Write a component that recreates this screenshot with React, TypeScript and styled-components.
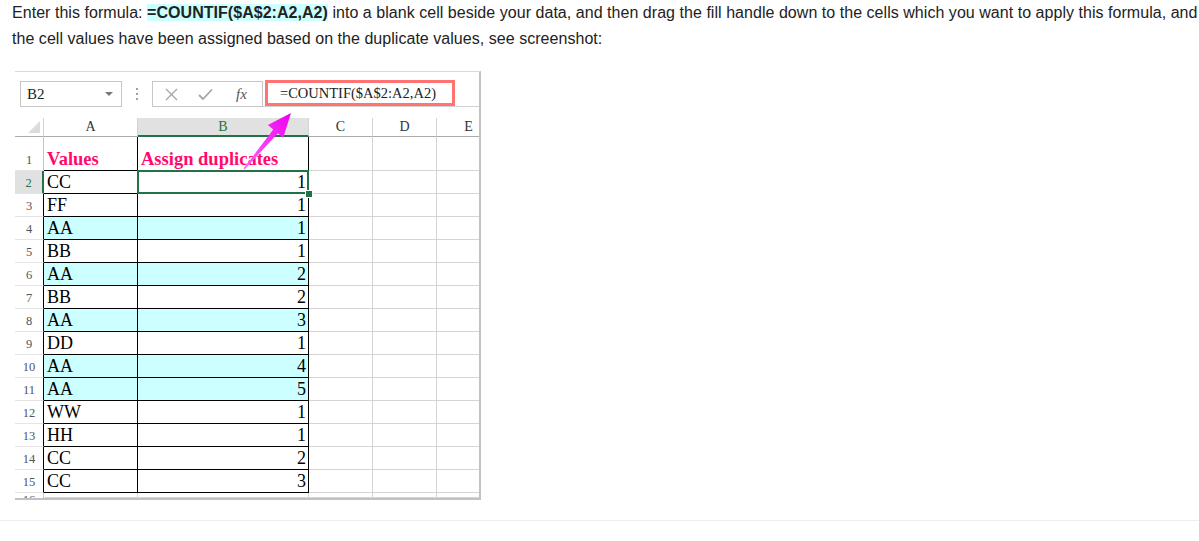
import React from "react";
import styled, { createGlobalStyle } from "styled-components";

const GlobalStyle = createGlobalStyle`
  html, body {
    margin: 0;
    padding: 0;
    background: #fff;
  }
  body {
    font-family: "Liberation Sans", Arial, sans-serif;
  }
`;

const GREEN = "#217346";
const SERIF = `"Liberation Serif", "Times New Roman", serif`;

const Article = styled.div`
  width: 1199px;
  height: 541px;
  overflow: hidden;
`;

const Intro = styled.p`
  margin: 0;
  padding: 0 0 0 12px;
  font-size: 16px;
  line-height: 26px;
  letter-spacing: 0.04px;
  color: #222;
`;

const Code = styled.b`
  background: #ccffff;
`;

const Shot = styled.div`
  position: relative;
  margin: 19px 0 0 15px;
  width: 464px;
  border-top: 1px solid #dadada;
  border-right: 2px solid #c2c2c2;
  border-bottom: 2px solid #c2c2c2;
  background: #fff;
`;

const FormulaBar = styled.div`
  display: flex;
  align-items: stretch;
  height: 26px;
  padding: 9px 0 0 5px;
  margin-bottom: 11px;
`;

const NameBox = styled.div`
  box-sizing: border-box;
  width: 102px;
  display: flex;
  align-items: center;
  justify-content: space-between;
  padding: 0 8px 0 6px;
  border: 1px solid #c6c6c6;
  font-family: ${SERIF};
  font-size: 15px;
  color: #222;
`;

const Caret = styled.span`
  width: 0;
  height: 0;
  border-left: 4px solid transparent;
  border-right: 4px solid transparent;
  border-top: 4px solid #777;
`;

const Kebab = styled.div`
  width: 30px;
  display: flex;
  flex-direction: column;
  align-items: center;
  justify-content: center;
  gap: 3px;

  & > i {
    width: 2px;
    height: 2px;
    background: #a0a0a0;
  }
`;

const FxButtons = styled.div`
  box-sizing: border-box;
  width: 111px;
  display: flex;
  align-items: center;
  padding-left: 12px;
  gap: 20px;
  border: 1px solid #c6c6c6;
`;

const Fx = styled.span`
  font-family: ${SERIF};
  font-style: italic;
  font-size: 15px;
  color: #555;
  margin-left: 3px;
`;

const FormulaInput = styled.div`
  flex: 1;
  display: flex;
  padding-left: 2px;
  border-bottom: 1px solid #d0d0d0;
`;

const Callout = styled.div`
  box-sizing: border-box;
  width: 190px;
  height: 26px;
  margin-top: -1px;
  padding-left: 12px;
  display: flex;
  align-items: center;
  border: 3px solid #ff7373;
  font-family: ${SERIF};
  font-size: 14.5px;
  color: #222;
`;

const Sheet = styled.div`
  display: grid;
  grid-template-columns: 29px 94px 171px 64px 64px 64px;
  grid-template-rows: 19px 34px repeat(14, 23px) 5px;
  overflow: hidden;
  font-family: ${SERIF};
`;

const Corner = styled.div`
  display: flex;
  align-items: flex-end;
  justify-content: flex-end;
  padding: 0 3px 3px 0;
  border-right: 1px solid #d4d4d4;
  border-bottom: 1px solid #ababab;

  & > i {
    width: 0;
    height: 0;
    border-left: 12px solid transparent;
    border-bottom: 12px solid #dcdcdc;
  }
`;

const ColHead = styled.div<{ $active?: boolean }>`
  display: flex;
  align-items: center;
  justify-content: center;
  font-size: 14px;
  color: ${(p) => (p.$active ? GREEN : "#333")};
  background: ${(p) => (p.$active ? "#e1e1e1" : "#fff")};
  border-right: 1px solid #d4d4d4;
  border-bottom: ${(p) => (p.$active ? `2px solid ${GREEN}` : "1px solid #ababab")};
`;

const RowHead = styled.div<{ $active?: boolean; $edge: string; $clipped?: boolean }>`
  display: flex;
  align-items: ${(p) => (p.$clipped ? "flex-start" : "flex-end")};
  justify-content: center;
  padding-bottom: ${(p) => (p.$clipped ? 0 : "3px")};
  overflow: hidden;
  font-size: 12.5px;
  line-height: 14px;
  color: ${(p) => (p.$active ? GREEN : "#555")};
  background: ${(p) => (p.$active ? "#e1e1e1" : "#fff")};
  border-right: ${(p) => (p.$active ? `2px solid ${GREEN}` : `1px solid ${p.$edge}`)};
  border-bottom: ${(p) => (p.$clipped ? "none" : "1px solid #e4e4e4")};
`;

const Cell = styled.div<{ $shade?: boolean; $num?: boolean; $title?: boolean }>`
  position: relative;
  display: flex;
  align-items: flex-end;
  justify-content: ${(p) => (p.$num ? "flex-end" : "flex-start")};
  padding: ${(p) => (p.$title ? "0 0 0 3px" : "0 2px 0 3px")};
  font-size: ${(p) => (p.$title ? "18.5px" : "18px")};
  font-weight: ${(p) => (p.$title ? 700 : 400)};
  line-height: ${(p) => (p.$title ? "22px" : "21px")};
  color: ${(p) => (p.$title ? "#ff0a6c" : "#000")};
  background: ${(p) => (p.$shade ? "#ccffff" : "transparent")};
  border-right: 1px solid #000;
  border-bottom: 1px solid #000;
  white-space: nowrap;
`;

// active cell: green frame plus the fill handle in its corner
const ActiveCell = styled(Cell)`
  z-index: 2;

  &::after {
    content: "";
    position: absolute;
    top: -1px;
    left: -1px;
    right: -1px;
    bottom: -1px;
    border: 2px solid ${GREEN};
  }

  &::before {
    content: "";
    position: absolute;
    right: -4px;
    bottom: -4px;
    width: 6px;
    height: 6px;
    background: ${GREEN};
    outline: 1px solid #fff;
    z-index: 1;
  }
`;

const Grid = styled.div`
  border-right: 1px solid #d4d4d4;
  border-bottom: 1px solid #d4d4d4;
`;

const Pointer = styled.svg`
  position: absolute;
  left: 220px;
  top: 35px;
  overflow: visible;
  pointer-events: none;
`;

const Rule = styled.div`
  margin-top: 20px;
  height: 1px;
  background: #eeeeee;
`;

const values: [string, number][] = [
  ["CC", 1],
  ["FF", 1],
  ["AA", 1],
  ["BB", 1],
  ["AA", 2],
  ["BB", 2],
  ["AA", 3],
  ["DD", 1],
  ["AA", 4],
  ["AA", 5],
  ["WW", 1],
  ["HH", 1],
  ["CC", 2],
  ["CC", 3],
];

const columns = ["A", "B", "C", "D", "E"];

const Blanks = () => (
  <>
    <Grid />
    <Grid />
    <Grid />
  </>
);

export default function App() {
  return (
    <Article>
      <GlobalStyle />
      <Intro>
        Enter this formula: <Code>=COUNTIF($A$2:A2,A2)</Code> into a blank cell
        beside your data, and then drag the fill handle down to the cells which
        you want to apply this formula, and the cell values have been assigned
        based on the duplicate values, see screenshot:
      </Intro>

      <Shot>
        <FormulaBar>
          <NameBox>
            B2
            <Caret />
          </NameBox>
          <Kebab>
            <i />
            <i />
            <i />
          </Kebab>
          <FxButtons>
            <svg width="13" height="13" viewBox="0 0 13 13">
              <path d="M1 1 L12 12 M12 1 L1 12" stroke="#a6a6a6" strokeWidth="1.3" fill="none" />
            </svg>
            <svg width="15" height="13" viewBox="0 0 15 13">
              <path d="M1 7 L5 11 L14 1.5" stroke="#a6a6a6" strokeWidth="1.8" fill="none" />
            </svg>
            <Fx>fx</Fx>
          </FxButtons>
          <FormulaInput>
            <Callout>=COUNTIF($A$2:A2,A2)</Callout>
          </FormulaInput>
        </FormulaBar>

        <Sheet>
          <Corner>
            <i />
          </Corner>
          {columns.map((c) => (
            <ColHead key={c} $active={c === "B"}>
              {c}
            </ColHead>
          ))}

          <RowHead $edge="#c6c6c6">1</RowHead>
          <Cell $title>Values</Cell>
          <Cell $title>Assign duplicates</Cell>
          <Blanks />

          {values.map(([v, n], i) => {
            const shade = v === "AA";
            const B = i === 0 ? ActiveCell : Cell;
            return (
              <React.Fragment key={i}>
                <RowHead $active={i === 0} $edge="#000">
                  {i + 2}
                </RowHead>
                <Cell $shade={shade}>{v}</Cell>
                <B $shade={shade} $num>
                  {n}
                </B>
                <Blanks />
              </React.Fragment>
            );
          })}

          <RowHead $edge="#c6c6c6" $clipped>
            16
          </RowHead>
          <Grid />
          <Grid />
          <Blanks />
        </Sheet>

        <Pointer width="70" height="70" viewBox="0 0 70 70">
          <defs>
            <linearGradient id="arrowFill" x1="0" y1="1" x2="1" y2="0">
              <stop offset="0" stopColor="#ff66ff" />
              <stop offset="1" stopColor="#ee00ee" />
            </linearGradient>
          </defs>
          <polygon
            points="8.5,61.6 9.5,62.4 42.9,26.3 48.2,30.8 56,6 32.9,18 38.3,22.5"
            fill="url(#arrowFill)"
          />
        </Pointer>
      </Shot>
      <Rule />
    </Article>
  );
}
